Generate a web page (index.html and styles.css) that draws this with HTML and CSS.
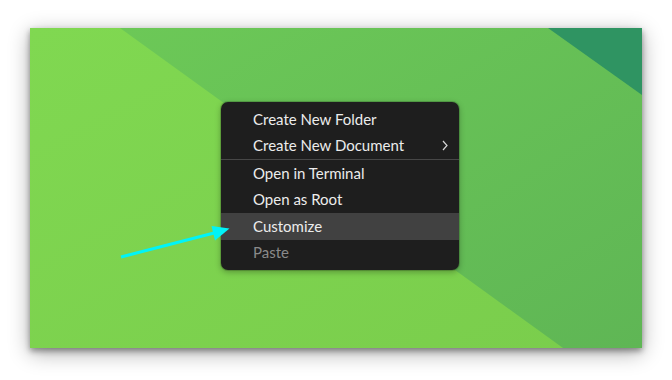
FILE: index.html
```html
<!DOCTYPE html>
<html>
<head>
<meta charset="utf-8">
<link rel="stylesheet" href="styles.css">
</head>
<body>
<div class="desktop">
  <svg class="wallpaper" width="612" height="320" viewBox="0 0 612 320">
    <defs>
      <linearGradient id="gl" x1="0" y1="0" x2="1" y2="1">
        <stop offset="0" stop-color="#80d851"/>
        <stop offset="1" stop-color="#7acd4c"/>
      </linearGradient>
      <linearGradient id="gm" x1="0" y1="0" x2="1" y2="1">
        <stop offset="0" stop-color="#6cc857"/>
        <stop offset="1" stop-color="#5fb655"/>
      </linearGradient>
    </defs>
    <rect width="612" height="320" fill="url(#gl)"/>
    <polygon points="90,0 612,0 612,320 533,320" fill="url(#gm)"/>
    <polygon points="518,0 612,0 612,67" fill="#2f9462"/>
  </svg>
  <div class="menu">
    <div class="item">Create New Folder</div>
    <div class="item has-sub">Create New Document
      <svg class="chev" width="6" height="11" viewBox="0 0 6 11"><path d="M1 1 L5 5.5 L1 10" fill="none" stroke="#d6d6d6" stroke-width="1.2"/></svg>
    </div>
    <div class="sep"></div>
    <div class="item">Open in Terminal</div>
    <div class="item">Open as Root</div>
    <div class="item active">Customize</div>
    <div class="item disabled">Paste</div>
  </div>
</div>
<svg class="arrow" width="672" height="380" viewBox="0 0 672 380">
  <line x1="121" y1="257" x2="216" y2="232.5" stroke="#00f4f8" stroke-width="3"/>
  <polygon points="229.5,228.5 211.5,226 215,240.5" fill="#00f4f8"/>
</svg>
</body>
</html>
```
FILE: styles.css
```css
html, body {
  margin: 0;
  padding: 0;
  background: #ffffff;
  width: 672px;
  height: 380px;
  overflow: hidden;
}
body {
  position: relative;
  font-family: Lato, "Noto Sans", sans-serif;
}
.desktop {
  position: relative;
  margin: 28px 0 0 30px;
  width: 612px;
  height: 320px;
  box-shadow: 0 3px 6px rgba(0,0,0,0.38), 0 5px 20px rgba(0,0,0,0.32);
}
.wallpaper {
  position: absolute;
  left: 0;
  top: 0;
  display: block;
}
.menu {
  position: absolute;
  left: 191px;
  top: 74px;
  width: 238px;
  box-sizing: border-box;
  padding: 4px 0 4px;
  background: #1e1e1e;
  border-radius: 7px;
  box-shadow: 0 0 0 1px rgba(0,0,0,0.15), 0 2px 6px rgba(0,0,0,0.3);
  overflow: hidden;
}
.item {
  height: 26.5px;
  display: flex;
  align-items: center;
  padding-left: 32px;
  padding-right: 11px;
  padding-bottom: 1px;
  box-sizing: border-box;
  color: #ececec;
  font-size: 15px;
}
.item.has-sub {
  justify-content: space-between;
}
.item .chev {
  display: block;
}
.item.active {
  background: #414141;
}
.item.disabled {
  color: #8a8a8a;
}
.sep {
  height: 1px;
  background: #474747;
}
.arrow {
  position: absolute;
  left: 0;
  top: 0;
  pointer-events: none;
}
```
